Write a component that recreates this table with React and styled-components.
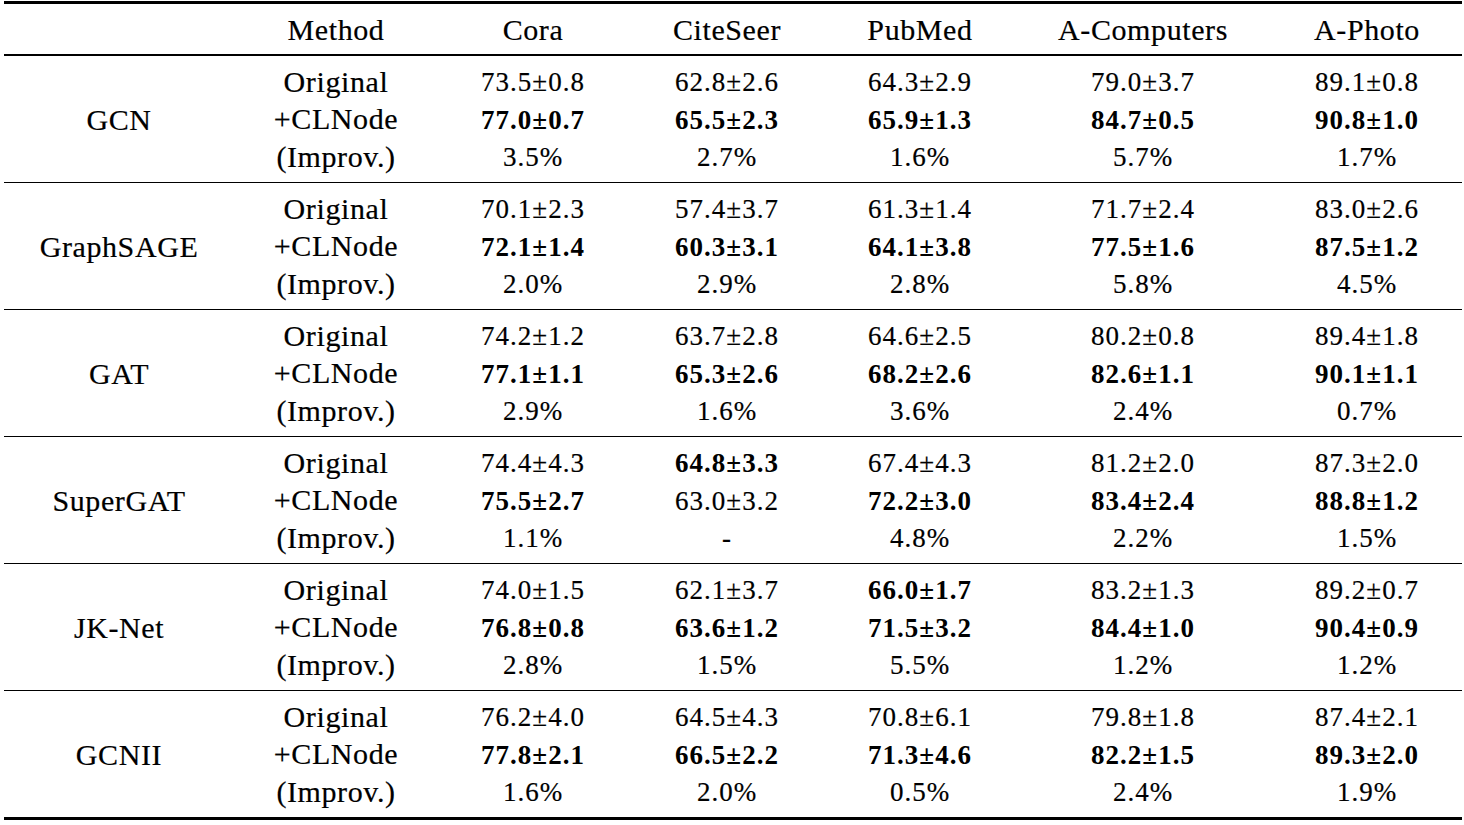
import React from "react";
import styled, { createGlobalStyle } from "styled-components";

const columns = "230px 204px 190px 198px 188px 258px 190px";

const headers = ["", "Method", "Cora", "CiteSeer", "PubMed", "A-Computers", "A-Photo"];

// "*" marks a bold (best) value
const models = [
  {
    name: "GCN",
    original: ["73.5±0.8", "62.8±2.6", "64.3±2.9", "79.0±3.7", "89.1±0.8"],
    clnode: ["*77.0±0.7", "*65.5±2.3", "*65.9±1.3", "*84.7±0.5", "*90.8±1.0"],
    improv: ["3.5%", "2.7%", "1.6%", "5.7%", "1.7%"],
  },
  {
    name: "GraphSAGE",
    original: ["70.1±2.3", "57.4±3.7", "61.3±1.4", "71.7±2.4", "83.0±2.6"],
    clnode: ["*72.1±1.4", "*60.3±3.1", "*64.1±3.8", "*77.5±1.6", "*87.5±1.2"],
    improv: ["2.0%", "2.9%", "2.8%", "5.8%", "4.5%"],
  },
  {
    name: "GAT",
    original: ["74.2±1.2", "63.7±2.8", "64.6±2.5", "80.2±0.8", "89.4±1.8"],
    clnode: ["*77.1±1.1", "*65.3±2.6", "*68.2±2.6", "*82.6±1.1", "*90.1±1.1"],
    improv: ["2.9%", "1.6%", "3.6%", "2.4%", "0.7%"],
  },
  {
    name: "SuperGAT",
    original: ["74.4±4.3", "*64.8±3.3", "67.4±4.3", "81.2±2.0", "87.3±2.0"],
    clnode: ["*75.5±2.7", "63.0±3.2", "*72.2±3.0", "*83.4±2.4", "*88.8±1.2"],
    improv: ["1.1%", "-", "4.8%", "2.2%", "1.5%"],
  },
  {
    name: "JK-Net",
    original: ["74.0±1.5", "62.1±3.7", "*66.0±1.7", "83.2±1.3", "89.2±0.7"],
    clnode: ["*76.8±0.8", "*63.6±1.2", "*71.5±3.2", "*84.4±1.0", "*90.4±0.9"],
    improv: ["2.8%", "1.5%", "5.5%", "1.2%", "1.2%"],
  },
  {
    name: "GCNII",
    original: ["76.2±4.0", "64.5±4.3", "70.8±6.1", "79.8±1.8", "87.4±2.1"],
    clnode: ["*77.8±2.1", "*66.5±2.2", "*71.3±4.6", "*82.2±1.5", "*89.3±2.0"],
    improv: ["1.6%", "2.0%", "0.5%", "2.4%", "1.9%"],
  },
];

function Value({ text }) {
  const bold = text.startsWith("*");
  return <Num $bold={bold}>{bold ? text.slice(1) : text}</Num>;
}

function ModelGroup({ model, last }) {
  const rows = [
    ["Original", model.original],
    ["+CLNode", model.clnode],
    ["(Improv.)", model.improv],
  ];
  return (
    <Group $last={last}>
      <ModelName>{model.name}</ModelName>
      {rows.map(([label, values], r) => (
        <React.Fragment key={label}>
          <Label style={{ gridRow: r + 1 }}>{label}</Label>
          {values.map((v, i) => (
            <Value key={i} text={v} />
          ))}
        </React.Fragment>
      ))}
    </Group>
  );
}

export default function App() {
  return (
    <>
      <GlobalStyle />
      <Page>
        <Table>
          <HeaderRow>
            {headers.map((h, i) => (
              <HeaderCell key={i}>{h}</HeaderCell>
            ))}
          </HeaderRow>
          {models.map((m, i) => (
            <ModelGroup key={m.name} model={m} last={i === models.length - 1} />
          ))}
        </Table>
      </Page>
    </>
  );
}

const GlobalStyle = createGlobalStyle`
  html, body {
    margin: 0;
    padding: 0;
    background: #ffffff;
  }
  body {
    font-family: "Liberation Serif", "Times New Roman", serif;
    color: #000000;
  }
`;

const Page = styled.div`
  width: 1464px;
  height: 825px;
  padding: 1px 0 0 4px;
  box-sizing: border-box;
  background: #ffffff;
`;

const Table = styled.div`
  width: 1458px;
  border-top: 3px solid #000;
  border-bottom: 3px solid #000;
`;

const HeaderRow = styled.div`
  display: grid;
  grid-template-columns: ${columns};
  height: 50px;
  align-items: center;
  border-bottom: 2px solid #000;
`;

const HeaderCell = styled.div`
  text-align: center;
  font-size: 30px;
  letter-spacing: 0.6px;
  -webkit-text-stroke: 0.2px #000;
  padding-top: 2px;
`;

const Group = styled.div`
  display: grid;
  grid-template-columns: ${columns};
  grid-template-rows: repeat(3, 37.5px);
  grid-auto-flow: row dense;
  align-items: center;
  padding: 7px 0 6.5px;
  border-bottom: ${(p) => (p.$last ? "none" : "1px solid #000")};
`;

const ModelName = styled.div`
  grid-column: 1;
  grid-row: 1 / span 3;
  text-align: center;
  font-size: 30px;
  letter-spacing: 0.6px;
  -webkit-text-stroke: 0.2px #000;
  padding-top: 1px;
`;

const Label = styled.div`
  grid-column: 2;
  text-align: center;
  font-size: 30px;
  letter-spacing: 0.6px;
  -webkit-text-stroke: 0.2px #000;
`;

const Num = styled.div`
  text-align: center;
  font-size: 27px;
  letter-spacing: 1px;
  padding-top: 2px;
  font-weight: ${(p) => (p.$bold ? 700 : 400)};
  -webkit-text-stroke: ${(p) => (p.$bold ? "0" : "0.2px #000")};
`;
